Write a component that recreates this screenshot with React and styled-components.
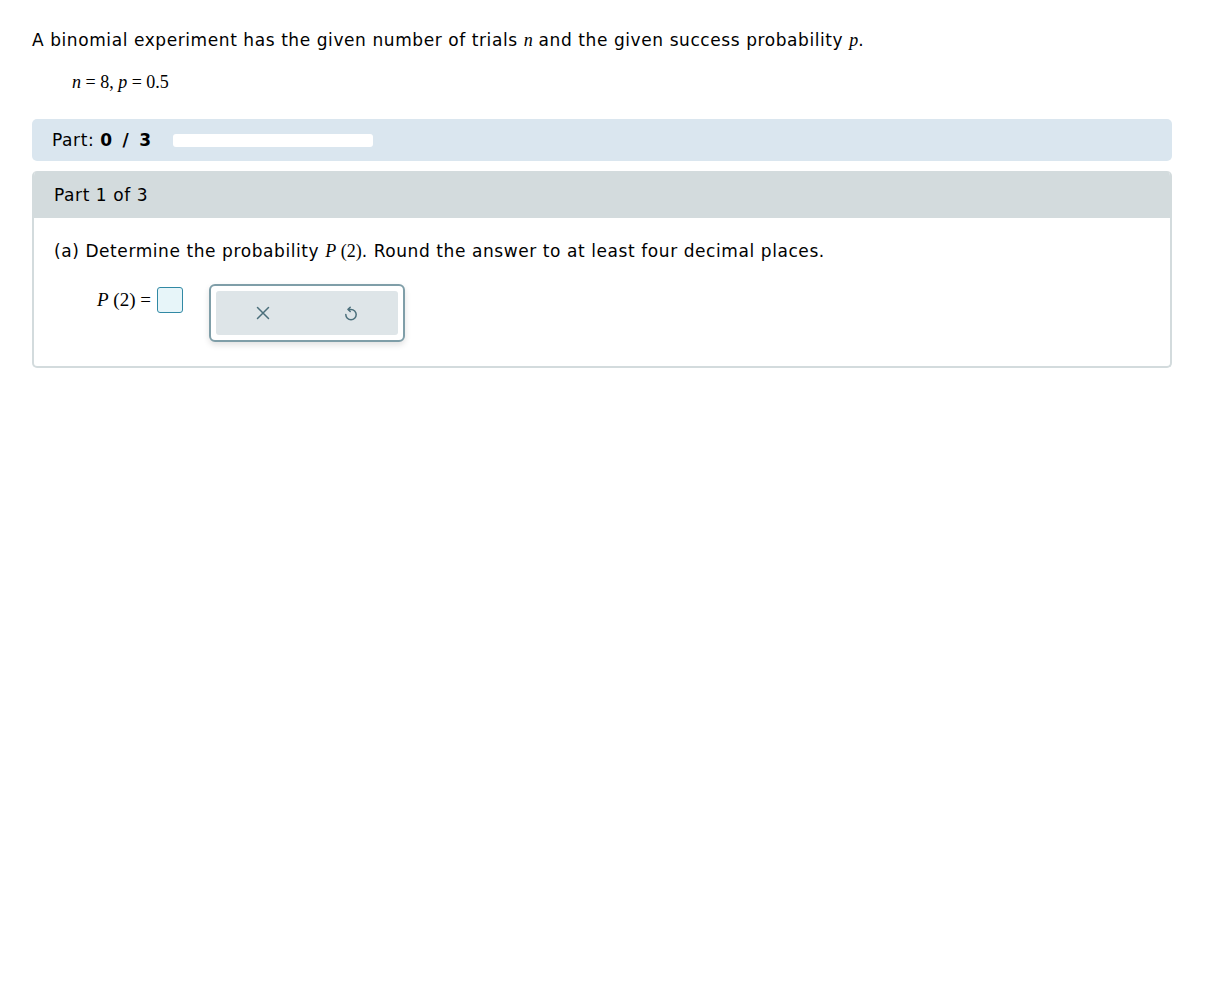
import React from 'react';
import styled, { createGlobalStyle } from 'styled-components';

const GlobalStyle = createGlobalStyle`
    body {
        margin: 0;
        background: #fff;
        font-family: "DejaVu Sans", Verdana, sans-serif;
        color: #000;
    }
`;

const Page = styled.div`
    padding: 28px 36px 0 32px;
`;

const Text = styled.div`
    font-size: 17px;
    letter-spacing: 0.58px;
    line-height: 24px;
`;

const Strong = styled.b`
    letter-spacing: 1.8px;
    word-spacing: 1px;
`;

const MathVar = styled.i`
    font-family: "Liberation Serif", "Times New Roman", serif;
    font-size: 18px;
    letter-spacing: 0;
`;

const MathLine = styled.div`
    margin: 18px 0 0 40px;
    font-family: "Liberation Serif", "Times New Roman", serif;
    font-size: 18px;
    line-height: 24px;
`;

const PartBar = styled.div`
    margin-top: 25px;
    height: 42px;
    background: #dae6ef;
    border-radius: 5px;
    display: flex;
    align-items: center;
    padding-left: 20px;
    gap: 20px;
`;

const Progress = styled.div`
    width: 200px;
    height: 13px;
    background: #fff;
    border-radius: 3px;
`;

const Card = styled.div`
    margin-top: 10px;
    border: 2px solid #d3dbdd;
    border-top: none;
    border-radius: 5px;
    overflow: hidden;
`;

const CardHeader = styled(Text)`
    background: #d3dbdd;
    height: 47px;
    display: flex;
    align-items: center;
    padding-left: 20px;
`;

const CardBody = styled.div`
    padding: 21px 20px 24px 20px;
`;

const AnswerRow = styled.div`
    display: flex;
    align-items: flex-start;
    margin-top: 21px;
    padding-left: 43px;
`;

const Label = styled.div`
    display: flex;
    align-items: center;
    height: 26px;
    margin-top: 3px;
    font-family: "Liberation Serif", "Times New Roman", serif;
    font-size: 19px;
    white-space: pre;
`;

const InputBox = styled.div`
    width: 24px;
    height: 24px;
    margin: 3px 0 0 6px;
    border: 1px solid #3189a4;
    border-radius: 3px;
    background: #e7f5f9;
`;

const Tools = styled.div`
    margin-left: 26px;
    border: 2px solid #7f9ea8;
    border-radius: 6px;
    padding: 5px;
    box-shadow: 0 3px 6px rgba(0, 0, 0, 0.12);
    background: #fff;
`;

const ToolsInner = styled.div`
    width: 182px;
    height: 44px;
    background: #dee5e8;
    border-radius: 3px;
    display: flex;
    align-items: center;
    justify-content: space-around;
    padding: 0 3px;
    box-sizing: border-box;
`;

const IconButton = styled.button`
    border: none;
    background: transparent;
    padding: 0;
    display: flex;
    align-items: center;
    justify-content: center;
    width: 30px;
    height: 30px;
    cursor: pointer;
`;

function App() {
    return (
        <>
            <GlobalStyle />
            <Page>
                <Text>
                    A binomial experiment has the given number of trials <MathVar>n</MathVar> and the given success probability <MathVar>p</MathVar>.
                </Text>
                <MathLine>
                    <i>n</i> = 8, <i>p</i> = 0.5
                </MathLine>
                <PartBar>
                    <Text>Part: <Strong>0 / 3</Strong></Text>
                    <Progress />
                </PartBar>
                <Card>
                    <CardHeader>Part 1 of 3</CardHeader>
                    <CardBody>
                        <Text>
                            (a) Determine the probability <MathVar>P</MathVar><MathVar as="span"> (2)</MathVar>. Round the answer to at least four decimal places.
                        </Text>
                        <AnswerRow>
                            <Label><i>P</i> (2) =</Label>
                            <InputBox />
                            <Tools>
                                <ToolsInner>
                                    <IconButton aria-label="clear">
                                        <svg width="16" height="16" viewBox="0 0 16 16" fill="none" stroke="#4b6f7b" strokeWidth="1.5" strokeLinecap="round">
                                            <path d="M2.5 2.5 L13.5 13.5 M13.5 2.5 L2.5 13.5" />
                                        </svg>
                                    </IconButton>
                                    <IconButton aria-label="undo">
                                        <svg width="16" height="16" viewBox="0 0 16 16" fill="none" stroke="#4b6f7b" strokeWidth="1.5" strokeLinecap="round" strokeLinejoin="round">
                                            <path d="M5.3 4.4 H8 A5.2 5.2 0 1 1 2.8 9.6" />
                                            <path d="M7.2 2.3 L5.1 4.4 L7.2 6.5" />
                                        </svg>
                                    </IconButton>
                                </ToolsInner>
                            </Tools>
                        </AnswerRow>
                    </CardBody>
                </Card>
            </Page>
        </>
    );
}

export default App;
